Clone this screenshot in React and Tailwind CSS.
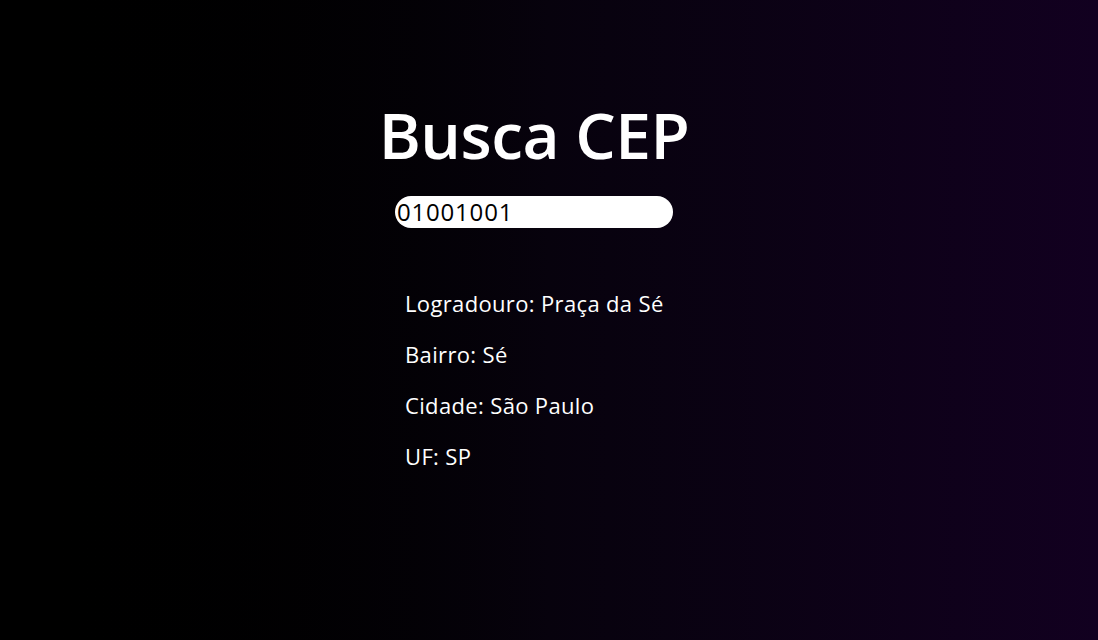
import React, { useState } from 'react';

const App = () => {
  const [cep, setCep] = useState('01001001');

  const endereco = [
    { label: 'Logradouro', value: 'Praça da Sé' },
    { label: 'Bairro', value: 'Sé' },
    { label: 'Cidade', value: 'São Paulo' },
    { label: 'UF', value: 'SP' },
  ];

  return (
    <div
      className="min-h-screen w-full bg-gradient-to-r from-[#000000] via-[#07020d] to-[#120020] text-white"
      style={{ fontFamily: '"Open Sans", "Noto Sans", sans-serif' }}
    >
      <div className="flex flex-col items-center pr-[30px] pt-[93px]">
        <h1 className="text-[64px] font-semibold leading-[84px] tracking-[-0.5px]">Busca CEP</h1>

        <input
          type="text"
          value={cep}
          onChange={(e) => setCep(e.target.value)}
          className="mt-[19px] h-[32px] w-[278px] rounded-full bg-white px-[2px] text-[24px] tracking-[0.8px] text-black outline-none"
        />

        {/* Resultado */}
        <div className="mt-[60px] w-[278px] pl-[10px]">
          {endereco.map((item) => (
            <p key={item.label} className="mb-[21px] text-[22px] leading-[30px] tracking-[0.35px]">
              {item.label}: {item.value}
            </p>
          ))}
        </div>
      </div>
    </div>
  );
};

export default App;
